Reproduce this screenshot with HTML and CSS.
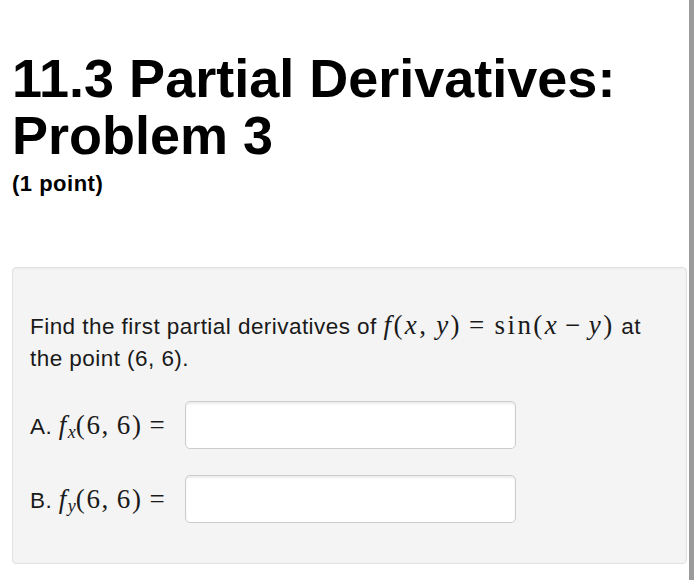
FILE: index.html
```html
<!DOCTYPE html>
<html lang="en">
<head>
<meta charset="utf-8">
<title>11.3 Partial Derivatives: Problem 3</title>
<link rel="stylesheet" href="styles.css">
</head>
<body>
<div class="page">
  <main class="content">
    <h1 class="title">11.3 Partial Derivatives:<br>Problem 3</h1>
    <div class="points">(1 point)</div>
    <section class="well">
      <p class="prompt">Find the first partial derivatives of <span class="math"><i>f</i>(<i>x</i>,&#8201;<i>y</i>)<span class="rel">=</span>sin(<i>x</i><span class="bin">&minus;</span><i>y</i>)</span> at the point (6, 6).</p>
      <div class="answer">
        <span class="label">A. <span class="math"><i>f</i><sub><i>x</i></sub>(6,&#8201;6)<span class="rel">=</span></span></span>
        <span class="field"></span>
      </div>
      <div class="answer">
        <span class="label">B. <span class="math"><i>f</i><sub><i>y</i></sub>(6,&#8201;6)<span class="rel">=</span></span></span>
        <span class="field"></span>
      </div>
    </section>
  </main>
  <div class="scrollbar"></div>
</div>
</body>
</html>
```

FILE: styles.css
```css
html, body {
  margin: 0;
  padding: 0;
  background: #ffffff;
}

.page {
  display: flex;
  width: 700px;
  height: 580px;
  overflow: hidden;
}

.content {
  width: 677px;
  padding: 0 0 0 12px;
  font-family: "Liberation Sans", Arial, sans-serif;
  color: #111;
}

.title {
  margin: 50px 0 0 0;
  font-size: 54px;
  line-height: 57px;
  font-weight: 700;
  color: #000;
}

.points {
  margin-top: 8px;
  font-size: 22px;
  line-height: 24px;
  font-weight: 700;
  letter-spacing: 0.5px;
  color: #000;
}

.well {
  margin-top: 71px;
  width: 675px;
  box-sizing: border-box;
  background: #f4f4f4;
  border: 1px solid #e2e2e2;
  border-radius: 4px;
  box-shadow: inset 0 1px 2px rgba(0, 0, 0, 0.04);
  padding: 41px 17px 40px 17px;
  display: flex;
  flex-direction: column;
  gap: 26px;
}

.prompt {
  margin: 0;
  font-size: 22.5px;
  line-height: 32px;
  letter-spacing: 0.45px;
  color: #1a1a1a;
}

.math {
  font-family: "Liberation Serif", "Times New Roman", serif;
  font-size: 27px;
  letter-spacing: 2.4px;
  white-space: nowrap;
}

.math i {
  font-style: italic;
}

.rel {
  padding: 0 8px 0 7px;
}

.bin {
  padding: 0 6px;
}

.math sub {
  font-size: 18px;
  letter-spacing: 0;
  vertical-align: -4px;
  line-height: 0;
}

.answer {
  display: flex;
  align-items: center;
  gap: 14px;
}

.label {
  width: 141px;
  flex: none;
  font-size: 22.5px;
  letter-spacing: 0.4px;
  color: #1a1a1a;
  white-space: nowrap;
}

.label .math {
  letter-spacing: 1.6px;
}

.label .rel {
  padding-right: 0;
}

.field {
  display: block;
  width: 331px;
  height: 48px;
  box-sizing: border-box;
  background: #ffffff;
  border: 1px solid #cccccc;
  border-radius: 5px;
  box-shadow: inset 0 2px 2px rgba(0, 0, 0, 0.08);
}

.scrollbar {
  width: 5px;
  height: 580px;
  background: #9b9b9b;
  flex: none;
}
```
